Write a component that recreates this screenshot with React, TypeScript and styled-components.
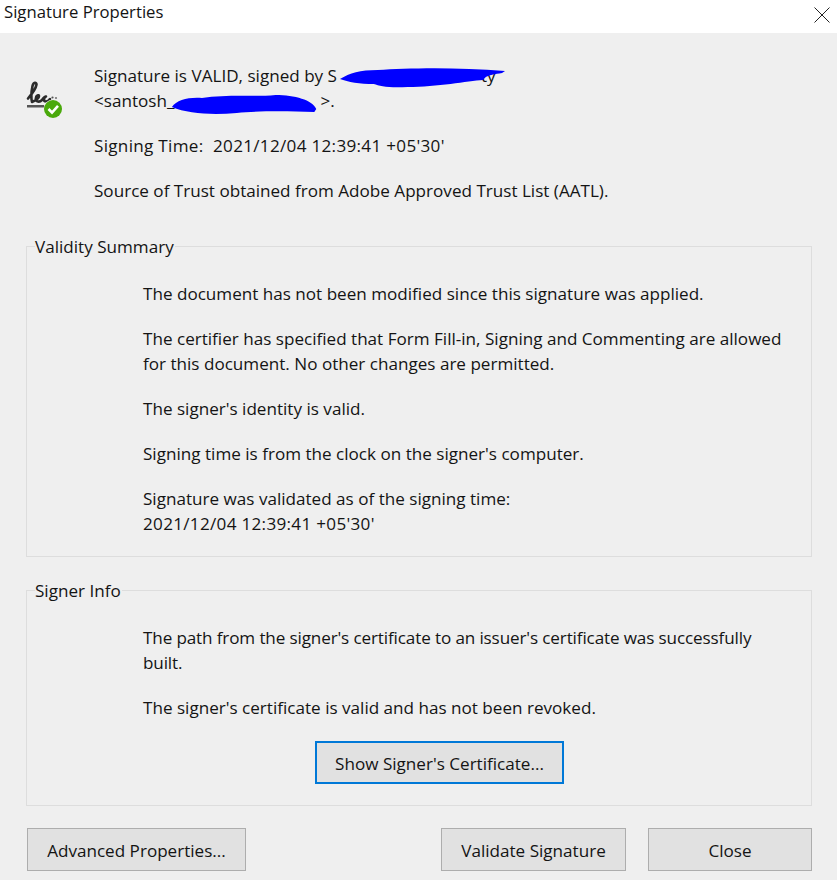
import React from "react";
import styled, { createGlobalStyle } from "styled-components";

const GlobalStyle = createGlobalStyle`
  html, body {
    margin: 0;
    padding: 0;
    background: #efefef;
  }
  body {
    font-family: "Open Sans", "Noto Sans", "Liberation Sans", sans-serif;
    font-size: 17.1px;
    line-height: 25px;
    color: #141414;
  }
`;

const Dialog = styled.div`
  width: 837px;
  height: 880px;
  overflow: hidden;
  display: flex;
  flex-direction: column;
  background: #efefef;
`;

const TitleBar = styled.div`
  height: 33px;
  flex: none;
  display: flex;
  align-items: center;
  justify-content: space-between;
  padding: 0 7px 10px 4px;
  box-sizing: border-box;
  background: #fff;
  font-size: 16.7px;
`;

const CloseIcon = styled.svg`
  width: 16px;
  height: 16px;
  margin-top: 6px;
`;

const Summary = styled.div`
  display: flex;
  padding: 30px 0 0 27px;
  height: 201px;
  flex: none;
  box-sizing: border-box;
`;

const SealIcon = styled.svg`
  width: 36px;
  height: 38px;
  margin-top: 17px;
  flex: none;
  overflow: visible;
`;

const SummaryText = styled.div`
  margin-left: 31px;
`;

const Para = styled.p<{ $tracking?: number }>`
  margin: 0 0 20px;
  letter-spacing: ${({ $tracking }) => $tracking ?? 0}px;
  &:last-child {
    margin-bottom: 0;
  }
`;

const Stamp = styled.span`
  letter-spacing: 0.3px;
`;

const Redacted = styled.span<{ $width: number }>`
  position: relative;
  display: inline-block;
  vertical-align: top;
  height: 25px;
  width: ${({ $width }) => $width}px;
`;

const Scribble = styled.svg<{ $left: number }>`
  position: absolute;
  left: ${({ $left }) => $left}px;
  top: 4px;
  overflow: visible;
`;

const Group = styled.fieldset<{ $height: number }>`
  margin: 0 25px 0 26px;
  padding: 0;
  border: 1px solid #dddddd;
  box-sizing: border-box;
  height: ${({ $height }) => $height}px;
  min-width: 0;
  flex: none;
`;

const GroupTitle = styled.legend`
  margin-left: 8px;
  padding: 0 1px 0 0;
`;

const GroupBody = styled.div`
  padding: 22px 21px 0 116px;
`;

const GroupGap = styled.div`
  height: 21px;
  flex: none;
`;

const CenterRow = styled.div`
  display: flex;
  justify-content: center;
  margin: 21px -21px 0 -116px;
  padding-left: 41px;
`;

const Button = styled.button<{ $width: number; $focused?: boolean }>`
  width: ${({ $width }) => $width}px;
  height: 43px;
  flex: none;
  padding: 1px 0 0;
  background: #e1e1e1;
  border: ${({ $focused }) => ($focused ? "2px solid #0078d7" : "1px solid #adadad")};
  border-radius: 0;
  color: #141414;
  font: inherit;
`;

const Footer = styled.div`
  display: flex;
  align-items: center;
  margin-top: 22px;
  padding: 0 25px 0 27px;
`;

const FooterRight = styled.div`
  margin-left: auto;
  display: flex;
  gap: 22px;
`;

const SignatureSeal = () => (
  <SealIcon viewBox="0 0 36 38">
    <path
      d="M1 18.500 C4 15 9 8 9.500 4.500 C9.500 2 6.500 2 5.500 6 C4.500 11 4 18 5 22 C7.500 21 12 18.500 12 16 C12 14.500 9 15 8.800 18.500 C8.800 22 12.500 22.500 15 20 C16 18.500 17.500 16.500 19 16.500 C17 17 16 21 18.500 21.500 C20.500 21.800 22 20.500 23 19"
      fill="none"
      stroke="#2b2b2b"
      strokeWidth="2.600"
      strokeLinecap="round"
      strokeLinejoin="round"
    />
    <circle cx="25.500" cy="17.500" r="1.100" fill="#555" />
    <circle cx="29" cy="18" r="1.100" fill="#777" />
    <rect x="0" y="25" width="17" height="2.500" fill="#555" />
    <circle cx="26" cy="29" r="9.500" fill="#efefef" />
    <circle cx="26" cy="29" r="9" fill="#4aa90c" />
    <path d="M21.500 29 L25 32.500 L31 25.800" fill="none" stroke="#fff" strokeWidth="2.600" />
  </SealIcon>
);

const App = () => {
  return (
    <Dialog>
      <GlobalStyle />
      <TitleBar>
        <span>Signature Properties</span>
        <CloseIcon viewBox="0 0 16 16">
          <path d="M0.500 0.500 L15.500 15.500 M15.500 0.500 L0.500 15.500" stroke="#222" strokeWidth="1" />
        </CloseIcon>
      </TitleBar>

      <Summary>
        <SignatureSeal />
        <SummaryText>
          <Para>
            Signature is VALID, signed by S
            <Redacted $width={144}>
              <Scribble $left={1} width="169" height="22" viewBox="0 0 170 22" preserveAspectRatio="none">
                <path
                  d="M2 12 C12 6 22 3 40 3 C70 1 120 0 168 4 L165 6 C150 8 148 10 146 13 C130 14 100 20 70 20 C50 21 42 19 36 17 C22 17 10 15 2 12 Z"
                  fill="#0000ff"
                />
              </Scribble>
            </Redacted>
            ty
            <br />
            &lt;santosh_
            <Redacted $width={146}>
              <Scribble $left={-5} width="155" height="22" viewBox="0 0 160 22" preserveAspectRatio="none">
                <path
                  d="M3 15 C8 8 20 5 34 6 C60 2 90 5 110 3 C130 3 148 8 152 17 L150 20 C120 19 90 19 70 21 C45 23 20 22 3 15 Z"
                  fill="#0000ff"
                />
              </Scribble>
            </Redacted>
            &gt;.
          </Para>
          <Para>
            <Stamp>Signing Time:&nbsp; 2021/12/04 12:39:41 +05'30'</Stamp>
          </Para>
          <Para>Source of Trust obtained from Adobe Approved Trust List (AATL).</Para>
        </SummaryText>
      </Summary>

      <Group $height={323}>
        <GroupTitle>Validity Summary</GroupTitle>
        <GroupBody>
          <Para>The document has not been modified since this signature was applied.</Para>
          <Para>
            The certifier has specified that Form Fill-in, Signing and Commenting are allowed
            <br />
            for this document. No other changes are permitted.
          </Para>
          <Para>The signer's identity is valid.</Para>
          <Para>Signing time is from the clock on the signer's computer.</Para>
          <Para>
            Signature was validated as of the signing time:
            <br />
            <Stamp>2021/12/04 12:39:41 +05'30'</Stamp>
          </Para>
        </GroupBody>
      </Group>

      <GroupGap />

      <Group $height={228}>
        <GroupTitle>Signer Info</GroupTitle>
        <GroupBody>
          <Para $tracking={-0.13}>
            The path from the signer's certificate to an issuer's certificate was successfully
            <br />
            built.
          </Para>
          <Para>The signer's certificate is valid and has not been revoked.</Para>
          <CenterRow>
            <Button $width={249} $focused>
              Show Signer's Certificate...
            </Button>
          </CenterRow>
        </GroupBody>
      </Group>

      <Footer>
        <Button $width={219}>Advanced Properties...</Button>
        <FooterRight>
          <Button $width={185}>Validate Signature</Button>
          <Button $width={164}>Close</Button>
        </FooterRight>
      </Footer>
    </Dialog>
  );
};

export default App;
